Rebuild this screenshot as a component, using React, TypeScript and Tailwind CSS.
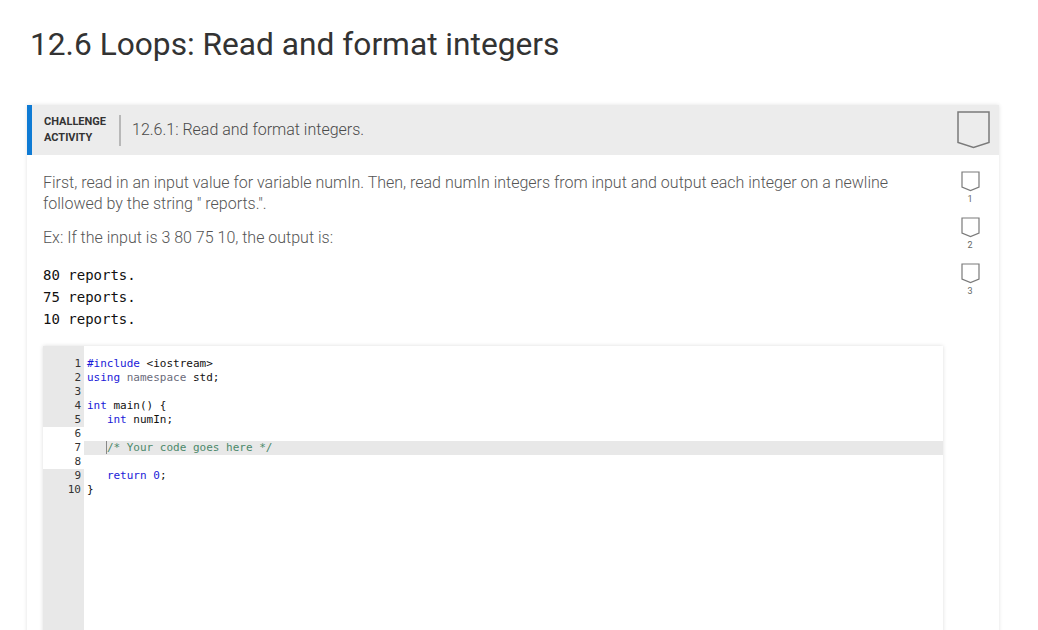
import React from 'react';

const mono = { fontFamily: '"DejaVu Sans Mono", "Liberation Mono", monospace' };

function Badge({ big }: { big?: boolean }) {
    if (big) {
        return (
            <svg width="33" height="38" viewBox="0 0 33 38" fill="none">
                <path d="M1 1 H32 V31.5 L16.5 36.5 L1 31.5 Z" stroke="#7a7a7a" strokeWidth="1.5" />
            </svg>
        );
    }
    return (
        <svg width="19" height="21" viewBox="0 0 19 21" fill="none">
            <path d="M1 1 H18 V16 L9.5 19.5 L1 16 Z" stroke="#7a7a7a" strokeWidth="1.2" />
        </svg>
    );
}

const kw = 'text-[#1a1ad8]';

const codeLines: React.ReactNode[] = [
    <><span className={kw}>#include</span> &lt;iostream&gt;</>,
    <><span className={kw}>using</span> <span className="text-[#6b6b7b]">namespace</span> std;</>,
    <></>,
    <><span className={kw}>int</span> main() {'{'}</>,
    <>{'   '}<span className={kw}>int</span> numIn;</>,
    <></>,
    <>{'   '}<span className="border-l border-[#888] -ml-px text-[#4c886b]">/* Your code goes here */</span></>,
    <></>,
    <>{'   '}<span className={kw}>return</span> <span className={kw}>0</span>;</>,
    <>{'}'}</>,
];

function CodeEditor() {
    return (
        <div className="h-[300px] bg-white shadow-[0_0_4px_rgba(0,0,0,0.14)] flex text-[11px] leading-[14px] text-[#111]" style={mono}>
            <div className="w-[41px] bg-[#e8e8e8] pt-[11px] shrink-0">
                {codeLines.map((_, i) => (
                    <div
                        key={i}
                        className={`h-[14px] text-right pr-[3px] text-[#333] ${i >= 5 && i <= 7 ? 'bg-white' : ''}`}
                    >
                        {i + 1}
                    </div>
                ))}
            </div>
            <div className="flex-1 pt-[11px]">
                {codeLines.map((line, i) => (
                    <div key={i} className={`h-[14px] pl-[3px] whitespace-pre ${i === 6 ? 'bg-[#e8e8e8]' : ''}`}>
                        {line}
                    </div>
                ))}
            </div>
        </div>
    );
}

export default function App() {
    return (
        <div className="min-h-screen bg-white" style={{ fontFamily: 'Roboto, "Liberation Sans", sans-serif' }}>
            <h1 className="pl-[30px] pt-[24px] text-[31.7px] leading-[42px] font-normal text-[#333]">
                12.6 Loops: Read and format integers
            </h1>

            <div className="ml-[27px] mt-[39px] w-[972px] bg-white shadow-[0_0_4px_rgba(0,0,0,0.12)]">
                {/* Header */}
                <div className="h-[50px] bg-[#ececec] border-l-[5px] border-[#0f7bd4] flex items-center justify-between pr-[9px]">
                    <div className="flex items-center">
                        <div className="pl-[12px] pr-[13px] text-[11px] leading-[16px] font-bold text-[#333] uppercase">
                            <div>Challenge</div>
                            <div>Activity</div>
                        </div>
                        <div className="w-[2px] h-[31px] bg-[#b8b8b8]" />
                        <div className="pl-[11px] text-[16px] font-light text-[#4a4a4a]">
                            12.6.1: Read and format integers.
                        </div>
                    </div>
                    <Badge big />
                </div>

                {/* Body */}
                <div className="flex">
                    <div className="w-[916px] pl-[16px] pt-[17px]">
                        <p className="pr-[40px] text-[16px] leading-[21px] font-light text-[#555]">
                            First, read in an input value for variable numIn. Then, read numIn integers from input and output each integer on a newline followed by the string " reports.".
                        </p>
                        <p className="mt-[13px] text-[16px] leading-[21px] font-light text-[#555]">
                            Ex: If the input is 3 80 75 10, the output is:
                        </p>
                        <pre className="mt-[16px] text-[14px] leading-[22px] text-[#111]" style={mono}>
{`80 reports.
75 reports.
10 reports.`}
                        </pre>
                        <div className="mt-[16px]">
                            <CodeEditor />
                        </div>
                    </div>

                    <div className="flex-1 flex flex-col items-center pt-[16px] pr-[2px]">
                        {[1, 2, 3].map((n) => (
                            <div key={n} className="flex flex-col items-center h-[46px]">
                                <Badge />
                                <span className="text-[9px] leading-[12px] mt-[1px] text-[#666]">{n}</span>
                            </div>
                        ))}
                    </div>
                </div>
            </div>
        </div>
    );
}
